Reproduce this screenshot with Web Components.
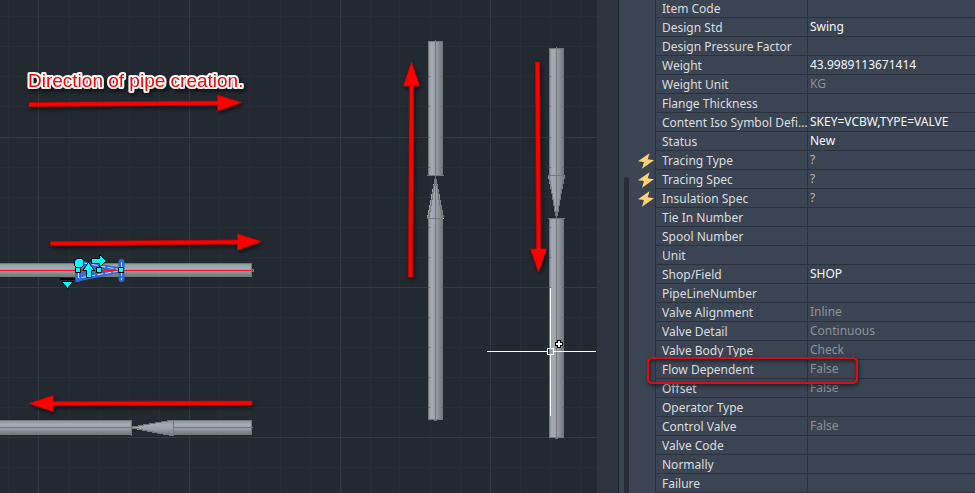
<!DOCTYPE html>
<html lang="en">
<head>
<meta charset="utf-8">
<title>Pipe drawing and properties</title>
<style>
  html, body { height: 100%; margin: 0; }
  body { overflow: hidden; background: #222930; font-family: "Noto Sans", "Open Sans", sans-serif; font-size: 12px; }
</style>
</head>
<body>
<cad-workspace>
  <pipe-drawing slot="drawing"></pipe-drawing>
  <property-palette slot="palette"><property-table></property-table></property-palette>
</cad-workspace>

<script>
class CadWorkspace extends HTMLElement {
  constructor() {
    super();
    this.attachShadow({ mode: "open" }).innerHTML = `
      <style>
        :host { display: flex; height: 100vh; overflow: hidden; }
        main { flex: 1; min-width: 0; display: grid; }
        .title { flex: 0 0 21px; background: #2f3440; border-right: 1px solid #20252d; }
        aside { flex: 0 0 356px; min-width: 0; display: grid; }
      </style>
      <main><slot name="drawing"></slot></main>
      <div class="title"></div>
      <aside><slot name="palette"></slot></aside>`;
  }
}
customElements.define("cad-workspace", CadWorkspace);

const lines = (list, d, cls) => list.map(v => `<path class="${cls}" d="${d(v)}"/>`).join("");

class PipeDrawing extends HTMLElement {
  constructor() {
    super();
    const minorX = [8, 69, 99, 129, 159, 219, 249, 280, 310, 370, 399, 430, 460, 520, 550, 580];
    const majorX = [38, 189, 340, 490];
    const minorY = [16, 46, 76, 106, 167, 197, 227, 257, 317, 347, 377, 407, 467];
    const majorY = [137, 287, 437];
    const v = x => `M${x + .5} 0V4000`, h = y => `M0 ${y + .5}H4000`;
    const ticksV = (x0, x1) => `<path class="tick" d="${[...minorY, ...majorY].filter(y => y > 50 && y < 410 && (y < 170 || y > 220)).map(y => `M${x0} ${y + .5}h2M${x1 - 2} ${y + .5}h2`).join("")}"/>`;
    this.attachShadow({ mode: "open" }).innerHTML = `
      <style>
        :host { display: block; min-width: 0; overflow: hidden; background: #222930; }
        svg { display: block; width: 100%; height: 100%; }
        .minor { stroke: #272e38; }
        .major { stroke: #323847; }
        .edge { fill: none; stroke: #777776; }
        .tick { stroke: #686b6e; }
        .arrow { fill: #fe0000; stroke: #c60404; stroke-width: .6; }
        .grip { fill: #00ffff; stroke: #000; }
        text { font: 19px "Liberation Sans", Arial, sans-serif; fill: #fe0000; stroke: #fff; stroke-width: 4px; stroke-linejoin: round; paint-order: stroke; }
      </style>
      <svg role="img" aria-label="Pipe runs with check valves and arrows for the direction of creation">
        <defs>
          <linearGradient id="gh" x1="0" y1="0" x2="0" y2="1">
            <stop offset="0" stop-color="#8d939b"/><stop offset=".3" stop-color="#a3aab4"/><stop offset=".55" stop-color="#9aa1aa"/><stop offset="1" stop-color="#6c7277"/>
          </linearGradient>
          <linearGradient id="gv" x1="0" y1="0" x2="1" y2="0">
            <stop offset="0" stop-color="#8d949c"/><stop offset=".25" stop-color="#a4abb6"/><stop offset=".5" stop-color="#9ca3ad"/><stop offset="1" stop-color="#6d7479"/>
          </linearGradient>
          <filter id="sh" x="-30" y="-30" width="660" height="560" filterUnits="userSpaceOnUse">
            <feDropShadow dx="1.5" dy="2.5" stdDeviation="2" flood-color="#000" flood-opacity=".6"/>
          </filter>
          <filter id="glow" x="60" y="250" width="80" height="45" filterUnits="userSpaceOnUse"><feGaussianBlur stdDeviation=".5"/></filter>
        </defs>
        <g shape-rendering="crispEdges">
          ${lines(minorX, v, "minor")}${lines(minorY, h, "minor")}
          ${lines(majorX, v, "major")}${lines(majorY, h, "major")}
        </g>

        <g shape-rendering="crispEdges">
          <rect x="0" y="263" width="252" height="14" fill="url(#gh)"/>
          <path class="edge" d="M0 263.500H251.500V276.500H0M252 269.500h1v2h-1"/>

          <rect x="0" y="420" width="131" height="15" fill="url(#gh)"/>
          <path class="edge" d="M0 420.500H131.500V436M0 434.500H131.500M0 427.500H131"/>
          <path d="M173 420L132 427.500V428.500L173 436Z" fill="url(#gh)"/>
          <path class="edge" d="M173 420.500h-6v1h-6v1h-6v1h-6v1h-6v1h-5v1h-6v1M173 435.500h-4v-1h-6v-1h-6v-1h-5v-1h-5v-1h-5v-1h-4v-1h-7"/>
          <rect x="173" y="420" width="79" height="15" fill="url(#gh)"/>
          <path class="edge" d="M173.500 420V436M174 420.500H251.500V434.500H174M174 427.500H253"/>

          <rect x="428" y="41" width="15" height="134" fill="url(#gv)"/>
          <rect x="428" y="218" width="15" height="202" fill="url(#gv)"/>
          <path d="M435 176L427 218H444L436 176Z" fill="url(#gv)"/>
          <path class="edge" d="M428.500 175V41.500H442.500V175M427 175.500H444M435.500 40V421M434.500 179v6h-1v7h-1v7h-1v6h-1v6h-1v5h-1v3M436.500 179v6h1v7h1v7h1v6h1v6h1v5h1v3M427 218.500H444M428.500 218V419.500H442.500V218M434 420.500h3"/>
          ${ticksV(428, 443)}
          <rect x="443" y="218" width="1" height="1" fill="#fff"/>

          <rect x="549" y="48" width="15" height="127" fill="url(#gv)"/>
          <path d="M548 176H565L557 217H556Z" fill="url(#gv)"/>
          <rect x="549" y="218" width="15" height="220" fill="url(#gv)"/>
          <path class="edge" d="M549.500 175V48.500H563.500V175M548 175.500H565M556.500 47V438M549.500 176v5h1v6h1v6h1v6h1v6h1v6h1v5M563.500 176v5h-1v6h-1v6h-1v6h-1v6h-1v6h-1v5M548 218.500H565M549.500 218V437.500H563.500V218M555 438.500h3"/>
          ${ticksV(549, 564)}
        </g>

        <g filter="url(#glow)" fill="none" stroke="#2e68dc" stroke-linecap="round">
          <path d="M78 263L121 270L78 279Z" fill="#3b6fd2" stroke-width="5"/>
          <path d="M78 263V279M121.500 262V279" stroke-width="6"/>
        </g>
        <path d="M84 263L119 269.500M119 271L79 278M78.500 272V279M121.500 262V280" fill="none" stroke="#cfdffc" stroke-dasharray="6 2"/>
        <rect x="0" y="270" width="251" height="1" fill="#fb1018"/>

        <path class="grip" d="M75.500 259.500l2-1h5l1 2v5l-2 2h-5l-2-2v-4Z"/>
        <path class="grip" d="M75.500 267.500h5v5h-5ZM96.500 267.500h5v5h-5ZM118.500 267.500h5v5h-5Z"/>
        <path class="grip" d="M88.500 262L94.500 270.500H91.500V277.500H86.500V270.500H83Z"/>
        <path class="grip" d="M91.500 258.500H99.500V254.500L106.500 261L99.500 267V263.500H91.500Z"/>
        <path d="M60 278h15v2H60Z"/>
        <path class="grip" d="M61.500 281.500H73L67.500 288.500Z"/>

        <g class="arrow" filter="url(#sh)">
          <path d="M29 102.500L217.500 101V95L241.500 102.500L217.500 111V105L29 106.500Z"/>
          <path d="M50.500 241.500L237.500 240V234L261.500 241.500L237.500 250V244L50.500 245.500Z"/>
          <path d="M252 401L53 401.500V395.500L29 403.500L53 411.500V405.500L252 405Z"/>
          <path d="M408.500 277L409.500 86H403.500L411.500 62L419.500 86H413.500L412.500 277Z"/>
          <path d="M535.500 62H539.500L540.500 249H546.500L538.500 272L530.500 249H536.500Z"/>
        </g>
        <text x="28" y="87" filter="url(#sh)">Direction of pipe creation.</text>

        <g shape-rendering="crispEdges">
          <path d="M487 351.500H547M554 351.500H596M550.500 288V348M550.500 355V416" stroke="#fff"/>
          <rect x="547.500" y="348.500" width="6" height="6" fill="none" stroke="#fff"/>
          <path d="M557.500 340.500h3v2h2v3h-2v2h-3v-2h-2v-3h2Z" fill="#fff" stroke="#000"/>
        </g>
      </svg>`;
  }
}
customElements.define("pipe-drawing", PipeDrawing);

class PropertyPalette extends HTMLElement {
  constructor() {
    super();
    this.attachShadow({ mode: "open" }).innerHTML = `
      <style>
        :host { display: flex; overflow: hidden; background: #3b4453; min-width: 0; }
        .rail { flex: 0 0 10px; display: flex; flex-direction: column; align-items: flex-end; }
        .thumb { width: 5px; height: 64%; margin-top: auto; background: #272d37; border-radius: 3px 3px 0 0; }
        .body { flex: 1; min-width: 0; }
      </style>
      <div class="rail"><div class="thumb"></div></div>
      <div class="body"><slot></slot></div>`;
  }
}
customElements.define("property-palette", PropertyPalette);

class BoltIcon extends HTMLElement {
  constructor() {
    super();
    this.attachShadow({ mode: "open" }).innerHTML = `
      <style>:host { display: block; width: 16px; height: 16px; white-space: normal; } svg { display: block; }</style>
      <svg width="16" height="16" viewBox="0 0 16 16" aria-hidden="true"><path fill="#ffd076" d="M11.500 .3L0 8.300L6 9L4 15.700L16 7.200L9.800 6.300Z"/></svg>`;
  }
}
customElements.define("bolt-icon", BoltIcon);

// name, value, kind: "ro" read-only, "ask" acquired on demand, "mark" read-only and outlined
const PROPERTIES = [
  ["Item Code"], ["Design Std", "Swing"], ["Design Pressure Factor"],
  ["Weight", "43.9989113671414"], ["Weight Unit", "KG", "ro"], ["Flange Thickness"],
  ["Content Iso Symbol Defi...", "SKEY=VCBW,TYPE=VALVE"], ["Status", "New"],
  ["Tracing Type", "?", "ask"], ["Tracing Spec", "?", "ask"], ["Insulation Spec", "?", "ask"],
  ["Tie In Number"], ["Spool Number"], ["Unit"], ["Shop/Field", "SHOP"], ["PipeLineNumber"],
  ["Valve Alignment", "Inline", "ro"], ["Valve Detail", "Continuous", "ro"],
  ["Valve Body Type", "Check", "ro"], ["Flow Dependent", "False", "mark"],
  ["Offset", "False", "ro"], ["Operator Type"], ["Control Valve", "False", "ro"],
  ["Valve Code"], ["Normally"], ["Failure"]
];

class PropertyTable extends HTMLElement {
  constructor() {
    super();
    const rows = PROPERTIES.map(([name, value = "", kind = ""]) => `
      <tr class="${kind}"><td class="icon">${kind === "ask" ? "<bolt-icon></bolt-icon>" : ""}</td><th scope="row">${name}${kind === "mark" ? '<span class="outline"></span>' : ""}</th><td class="value">${value}</td></tr>`).join("");
    this.attachShadow({ mode: "open" }).innerHTML = `
      <style>
        :host { display: block; margin-top: -1px; }
        table { width: 100%; border-collapse: separate; border-spacing: 0; table-layout: fixed; font-size: 12px; line-height: 17px; }
        .c1 { width: 26px; } .c2 { width: 153px; }
        td, th { height: 17px; padding: 0; font-weight: 400; text-align: left; white-space: nowrap; }
        .icon { padding-left: 9px; }
        th { position: relative; padding: 1px 0 0 6px; color: #dcdedf; border: 1px solid #2b323d; border-top-width: 0; }
        .value { padding: 0 0 1px 2px; color: #f6f7f8; border-bottom: 1px solid #2b323d; }
        .ro .value, .mark .value { color: #8c9197; }
        .ask .value { color: #b9bcc0; }
        .outline { position: absolute; z-index: 1; left: -9px; top: -3px; width: 207px; height: 23px; border: 2px solid #e00b0f; border-radius: 5px; box-shadow: 1px 2px 4px rgba(0,0,0,.5), inset 1px 2px 4px rgba(0,0,0,.5); }
      </style>
      <table aria-label="Properties"><colgroup><col class="c1"><col class="c2"><col></colgroup><tbody>${rows}</tbody></table>`;
  }
}
customElements.define("property-table", PropertyTable);
</script>
</body>
</html>
